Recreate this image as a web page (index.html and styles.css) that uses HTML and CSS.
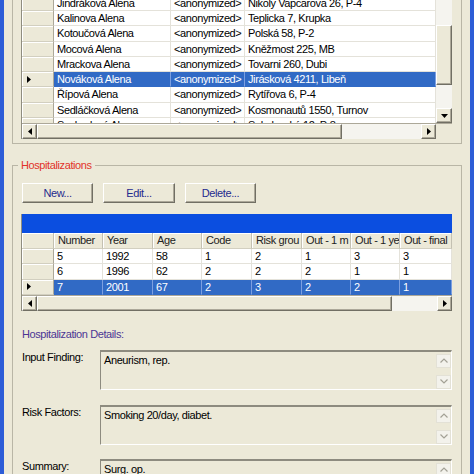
FILE: index.html
```html
<!DOCTYPE html>
<html lang="cs">
<head>
  <meta charset="UTF-8" />
  <title>Patients</title>
  <link rel="stylesheet" href="styles.css">
</head>
<body>

  <div class="frame"></div>

  <div class="window">

    <!-- patient list -->
    <div class="group group-patients">
      <div class="grid">
        <div class="grid-main">
          <div class="grid-view">
            <div class="grid-rows patients">
              <div class="row"><div class="cell rh"></div><div class="cell">Jindráková Alena</div><div class="cell">&lt;anonymized&gt;</div><div class="cell">Nikoly Vapcarova 26, P-4</div></div>
              <div class="row"><div class="cell rh"></div><div class="cell">Kalinova Alena</div><div class="cell">&lt;anonymized&gt;</div><div class="cell">Teplicka 7, Krupka</div></div>
              <div class="row"><div class="cell rh"></div><div class="cell">Kotoučová Alena</div><div class="cell">&lt;anonymized&gt;</div><div class="cell">Polská 58, P-2</div></div>
              <div class="row"><div class="cell rh"></div><div class="cell">Mocová Alena</div><div class="cell">&lt;anonymized&gt;</div><div class="cell">Kněžmost 225, MB</div></div>
              <div class="row"><div class="cell rh"></div><div class="cell">Mrackova Alena</div><div class="cell">&lt;anonymized&gt;</div><div class="cell">Tovarni 260, Dubi</div></div>
              <div class="row selected"><div class="cell rh"><svg class="ind" width="4" height="7"><polygon points="0,0 4,3.5 0,7"/></svg></div><div class="cell">Nováková Alena</div><div class="cell">&lt;anonymized&gt;</div><div class="cell">Jirásková 4211, Libeň</div></div>
              <div class="row"><div class="cell rh"></div><div class="cell">Řípová Alena</div><div class="cell">&lt;anonymized&gt;</div><div class="cell">Rytířova 6, P-4</div></div>
              <div class="row"><div class="cell rh"></div><div class="cell">Sedláčková Alena</div><div class="cell">&lt;anonymized&gt;</div><div class="cell">Kosmonautů 1550, Turnov</div></div>
              <div class="row"><div class="cell rh"></div><div class="cell">Svobodová Alena</div><div class="cell">&lt;anonymized&gt;</div><div class="cell">Sokolovská 12, P-8</div></div>
            </div>
          </div>
          <div class="vscroll">
            <div class="sb-track sb-top"></div>
            <div class="sb-thumb sb-vthumb"></div>
            <div class="sb-track sb-fill"></div>
            <div class="sb-btn"><svg width="7" height="4"><polygon points="0,0 7,0 3.5,4"/></svg></div>
          </div>
        </div>
        <div class="hscroll">
          <div class="sb-btn"><svg width="4" height="7"><polygon points="4,0 0,3.5 4,7"/></svg></div>
          <div class="sb-thumb thumb-patients"></div>
          <div class="sb-track sb-fill"></div>
          <div class="sb-btn"><svg width="4" height="7"><polygon points="0,0 4,3.5 0,7"/></svg></div>
          <div class="sb-corner"></div>
        </div>
      </div>
    </div>

    <!-- hospitalizations -->
    <fieldset class="group group-hosp">
      <legend>Hospitalizations</legend>

      <div class="buttons">
        <button class="btn btn-new">New...</button>
        <button class="btn btn-edit">Edit...</button>
        <button class="btn btn-delete">Delete...</button>
      </div>

      <div class="grid grid-hosp">
        <div class="caption"></div>
        <div class="row head">
          <div class="cell rh"></div>
          <div class="cell">Number</div>
          <div class="cell">Year</div>
          <div class="cell">Age</div>
          <div class="cell">Code</div>
          <div class="cell">Risk grou</div>
          <div class="cell">Out - 1 m</div>
          <div class="cell">Out - 1 ye</div>
          <div class="cell">Out - final</div>
        </div>
        <div class="row"><div class="cell rh"></div><div class="cell">5</div><div class="cell">1992</div><div class="cell">58</div><div class="cell">1</div><div class="cell">2</div><div class="cell">1</div><div class="cell">3</div><div class="cell">3</div></div>
        <div class="row"><div class="cell rh"></div><div class="cell">6</div><div class="cell">1996</div><div class="cell">62</div><div class="cell">2</div><div class="cell">2</div><div class="cell">2</div><div class="cell">1</div><div class="cell">1</div></div>
        <div class="row selected"><div class="cell rh"><svg class="ind" width="4" height="7"><polygon points="0,0 4,3.5 0,7"/></svg></div><div class="cell">7</div><div class="cell">2001</div><div class="cell">67</div><div class="cell">2</div><div class="cell">3</div><div class="cell">2</div><div class="cell">2</div><div class="cell">1</div></div>
        <div class="hscroll">
          <div class="sb-btn"><svg width="4" height="7"><polygon points="4,0 0,3.5 4,7"/></svg></div>
          <div class="sb-thumb thumb-hosp"></div>
          <div class="sb-track sb-fill"></div>
          <div class="sb-btn"><svg width="4" height="7"><polygon points="0,0 4,3.5 0,7"/></svg></div>
        </div>
      </div>

      <div class="details-title">Hospitalization Details:</div>

      <div class="field-row">
        <div class="field-label">Input Finding:</div>
        <div class="field">
          <div class="field-text">Aneurism, rep.</div>
          <div class="field-scroll">
            <span class="spin"><svg width="8" height="5"><polyline points="0.5,4.5 4,1 7.5,4.5"/></svg></span>
            <span class="spin"><svg width="8" height="5"><polyline points="0.5,0.5 4,4 7.5,0.5"/></svg></span>
          </div>
        </div>
      </div>

      <div class="field-row">
        <div class="field-label">Risk Factors:</div>
        <div class="field">
          <div class="field-text">Smoking 20/day, diabet.</div>
          <div class="field-scroll">
            <span class="spin"><svg width="8" height="5"><polyline points="0.5,4.5 4,1 7.5,4.5"/></svg></span>
            <span class="spin"><svg width="8" height="5"><polyline points="0.5,0.5 4,4 7.5,0.5"/></svg></span>
          </div>
        </div>
      </div>

      <div class="field-row">
        <div class="field-label">Summary:</div>
        <div class="field">
          <div class="field-text">Surg. op.</div>
          <div class="field-scroll">
            <span class="spin"><svg width="8" height="5"><polyline points="0.5,4.5 4,1 7.5,4.5"/></svg></span>
            <span class="spin"><svg width="8" height="5"><polyline points="0.5,0.5 4,4 7.5,0.5"/></svg></span>
          </div>
        </div>
      </div>
    </fieldset>

  </div>

  <div class="frame"></div>

</body>
</html>
```

FILE: styles.css
```css
/* window */
html, body {
  margin: 0; padding: 0;
}
body {
  width: 474px; height: 474px;
  overflow: hidden;
  display: flex;
  background: #ece9d8;
  font: 11px/14px "Liberation Sans", Arial, sans-serif;
  letter-spacing: -0.4px;
  color: #000;
}
.frame {
  flex: none;
  width: 4px;
  background: #2d5dd7;
}
.window {
  flex: 1;
  min-width: 0;
  display: flex; flex-direction: column;
  padding: 0 8px 0 8px;
}

/* group boxes */
.group {
  border: 1px solid #b9b6a6;
}
.group-patients {
  border-top: none;
  padding: 0 9px 4px 8px;
}
.group-hosp {
  margin: 15px 0 0;
  padding: 11px 9px 0 8px;
  border-bottom: none;
  min-width: 0;
}
.group-hosp legend {
  margin-left: -3px;
  padding: 0 3px;
  line-height: 13px;
  color: #e2322a;
}

/* grids */
.grid {
  border-left: 1px solid #8f8d80;
  display: flex; flex-direction: column;
}
.grid-main {
  display: flex;
  height: 123px;
}
.grid-view {
  flex: 1;
  overflow: hidden;
  background: #fff;
}
.grid-rows.patients {
  margin-top: -4.3px;
}
.row {
  display: grid;
  height: 15.3px;
}
.patients .row {
  grid-template-columns: 32px 117px 74px 191px;
  line-height: 15px;
}
.grid-hosp .row {
  grid-template-columns: 32px 49px 50px 49px 50px 50px 49px 49px 52px;
  background: #fff;
}
.cell {
  box-sizing: border-box;
  padding-left: 3px;
  border-right: 1px solid #e4e2da;
  border-bottom: 1px solid #e4e2da;
  white-space: nowrap;
  overflow: hidden;
}
.cell.rh {
  background: #ece9d8;
  border-right: 1px solid #aca899;
  border-bottom: 1px solid #d2cfc0;
  box-shadow: inset 1px 1px 0 #fff;
  padding-left: 5px;
  display: flex; align-items: center;
}
.ind polygon { fill: #000; }
.row.selected .cell:not(.rh) {
  background: #316ac5;
  color: #fff;
  border-right-color: #7c9fe0;
  border-bottom-color: #316ac5;
}

.caption {
  height: 19px;
  background: #0b4ee0;
}
.grid-hosp .row.head {
  height: 16px;
}
.row.head .cell {
  background: #ece9d8;
  color: #222;
  border-right: 1px solid #c4c1b2;
  border-bottom: 1px solid #d2cfc0;
  box-shadow: inset 1px 1px 0 #fff;
  padding-left: 4px;
  line-height: 15px;
}

/* scroll bars */
.vscroll {
  flex: none;
  width: 16px;
  display: flex; flex-direction: column;
}
.hscroll {
  flex: none;
  height: 15px;
  display: flex;
  border-top: 1px solid #aca899;
}
.sb-btn, .sb-thumb {
  box-sizing: border-box;
  background: #ece9d8;
  border: 1px solid;
  border-color: #fff #716f64 #716f64 #fff;
  box-shadow: inset -1px -1px 0 #aca899;
}
.sb-btn {
  flex: none;
  width: 15px; height: 15px;
  display: flex; align-items: center; justify-content: center;
}
.vscroll .sb-btn { width: 16px; }
.sb-btn polygon { fill: #000; }
.sb-track {
  background: #f5f4ef;
}
.sb-fill { flex: 1; }
.sb-top { height: 25px; flex: none; }
.sb-vthumb { height: 60px; flex: none; }
.thumb-patients { width: 305px; flex: none; }
.thumb-hosp { width: 355px; flex: none; }
.sb-corner {
  flex: none;
  width: 16px;
  background: #ece9d8;
}

/* buttons */
.buttons {
  display: flex;
  gap: 10px;
  padding-left: 1px;
}
.btn {
  height: 20px;
  padding: 0;
  font: 11px "Liberation Sans", Arial, sans-serif;
  letter-spacing: -0.4px;
  color: #1f2a8e;
  background: #ece9d8;
  border: 1px solid;
  border-color: #fff #716f64 #716f64 #fff;
  box-shadow: inset -1px -1px 0 #aca899;
}
.btn-new { width: 71px; }
.btn-edit { width: 72px; }
.btn-delete { width: 71px; }

.grid-hosp {
  margin-top: 11px;
}

/* details */
.details-title {
  margin-top: 17px;
  padding-left: 1px;
  line-height: 13px;
  color: #4b3594;
}
.field-row {
  display: flex;
  margin-top: 15px;
}
.details-title + .field-row {
  margin-top: 9px;
}
.field-row:last-child {
  margin-top: 14px;
}
.field-label {
  flex: none;
  width: 78px;
  padding: 1px 0 0 1px;
  line-height: 13px;
}
.field {
  flex: 1;
  height: 40px;
  box-sizing: border-box;
  display: flex;
  border: 1px solid;
  border-top-width: 2px;
  border-color: #8d8b7f #fff #fff #8d8b7f;
  background: #ece9d8;
}
.field-text {
  flex: 1;
  padding: 2px 3px;
  line-height: 13px;
}
.field-scroll {
  flex: none;
  width: 15px;
  padding-top: 2px;
  display: flex; flex-direction: column; justify-content: space-between;
}
.spin {
  box-sizing: border-box;
  height: 14px;
  display: flex; align-items: center; justify-content: center;
  background: #f3f2ec;
  border: 1px solid #e3e1d6;
}
.spin polyline {
  fill: none;
  stroke: #a3a196;
  stroke-width: 1.2;
}
```
